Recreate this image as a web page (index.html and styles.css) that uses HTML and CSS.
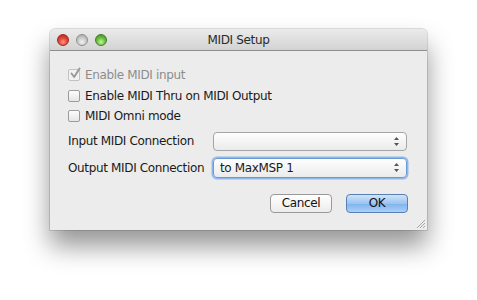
FILE: index.html
```html
<!DOCTYPE html>
<html>
<head>
<meta charset="utf-8">
<link rel="stylesheet" href="styles.css">
</head>
<body>
<div class="window">
  <div class="titlebar">
    <div class="lights">
      <span class="light red"></span>
      <span class="light gray"></span>
      <span class="light green"></span>
    </div>
    <div class="title">MIDI Setup</div>
  </div>
  <div class="content">
    <label class="check disabled"><span class="box checked"><svg width="13" height="13" viewBox="0 0 13 13"><path d="M2.5 6.5 L5.2 10 L10.5 1.5" fill="none" stroke="#9a9a9a" stroke-width="2" stroke-linecap="round" stroke-linejoin="round"/></svg></span>Enable MIDI input</label>
    <label class="check"><span class="box"></span>Enable MIDI Thru on MIDI Output</label>
    <label class="check"><span class="box"></span>MIDI Omni mode</label>
    <div class="field first">
      <span class="flabel">Input MIDI Connection</span>
      <div class="popup"><span class="ptext"></span><span class="arrows"><svg width="7" height="11" viewBox="0 0 7 11"><path d="M1 4 L3.5 1 L6 4 Z M1 7 L3.5 10 L6 7 Z" fill="#555"/></svg></span></div>
    </div>
    <div class="field">
      <span class="flabel">Output MIDI Connection</span>
      <div class="popup focus"><span class="ptext">to MaxMSP 1</span><span class="arrows"><svg width="7" height="11" viewBox="0 0 7 11"><path d="M1 4 L3.5 1 L6 4 Z M1 7 L3.5 10 L6 7 Z" fill="#555"/></svg></span></div>
    </div>
    <div class="buttons">
      <button class="btn">Cancel</button>
      <button class="btn default">OK</button>
    </div>
  </div>
  <svg class="grip" width="11" height="11" viewBox="0 0 11 11"><path d="M10 2 L2 10 M10 5 L5 10 M10 8 L8 10" stroke="#a8a8a8" stroke-width="1"/></svg>
</div>
</body>
</html>
```
FILE: styles.css
```css
html, body {
  margin: 0;
  padding: 0;
  background: #fff;
}
body {
  width: 477px;
  height: 300px;
  overflow: hidden;
  font-family: "DejaVu Sans", "Liberation Sans", sans-serif;
  font-size: 12px;
  letter-spacing: -0.35px;
  color: #1a1a1a;
}
.window {
  position: relative;
  margin: 29px 0 0 50px;
  width: 377px;
  height: 201px;
  background: #ececec;
  border-radius: 5px 5px 0 0;
  box-shadow: 0 16px 26px rgba(0,0,0,0.42), 0 0 0 1px rgba(0,0,0,0.12);
  display: flex;
  flex-direction: column;
}
.titlebar {
  height: 21px;
  flex: none;
  border-radius: 5px 5px 0 0;
  background: linear-gradient(#ebebeb, #d3d3d3);
  border-bottom: 1px solid #8e8e8e;
  display: flex;
  align-items: center;
  position: relative;
}
.lights {
  display: flex;
  gap: 7px;
  margin-left: 7px;
}
.light {
  width: 12px;
  height: 12px;
  border-radius: 50%;
  box-sizing: border-box;
}
.red {
  background: radial-gradient(circle at 50% 70%, #ff9a8a 0%, #e5483b 45%, #b01e14 100%);
  border: 1px solid #9e2a20;
}
.gray {
  background: radial-gradient(circle at 50% 70%, #f4f4f4 0%, #c9c9c9 50%, #a0a0a0 100%);
  border: 1px solid #8f8f8f;
}
.green {
  background: radial-gradient(circle at 50% 70%, #c8f5a0 0%, #6fc144 45%, #3a8a1c 100%);
  border: 1px solid #3f7f22;
}
.title {
  position: absolute;
  left: 0;
  right: 0;
  text-align: center;
  font-size: 12px;
  color: #2a2a2a;
  pointer-events: none;
}
.content {
  padding: 14px 0 0 18px;
  display: flex;
  flex-direction: column;
}
.check {
  display: flex;
  align-items: center;
  height: 20.5px;
  gap: 4px;
}
.check.disabled {
  color: #8c8c8c;
}
.box {
  width: 12px;
  height: 12px;
  box-sizing: border-box;
  border: 1px solid #9c9c9c;
  border-radius: 2px;
  background: linear-gradient(#fdfdfd, #e6e6e6);
  position: relative;
  margin-right: 1px;
}
.box.checked {
  border-color: #c2c2c2;
  background: #f2f2f2;
}
.box svg {
  position: absolute;
  left: 0;
  top: -3px;
}
.field {
  display: flex;
  align-items: center;
  margin-top: 6px;
}
.field.first {
  margin-top: 5px;
}
.field + .field {
  margin-top: 7px;
}
.flabel {
  width: 145px;
}
.popup {
  width: 194px;
  height: 19px;
  box-sizing: border-box;
  border: 1px solid #a5a5a5;
  border-radius: 4px;
  background: linear-gradient(#fefefe, #ebebeb);
  display: flex;
  align-items: center;
  justify-content: space-between;
  padding: 0 6px 0 6px;
}
.popup.focus {
  border-color: #6b9bd6;
  box-shadow: 0 0 0 1.5px #8fb8ea;
  height: 20px;
}
.arrows {
  display: flex;
}
.buttons {
  display: flex;
  justify-content: flex-end;
  gap: 14px;
  margin-top: 16px;
  padding-right: 19px;
}
.btn {
  width: 62px;
  height: 19px;
  box-sizing: border-box;
  font-family: "DejaVu Sans", "Liberation Sans", sans-serif;
  font-size: 12px;
  letter-spacing: -0.35px;
  color: #111;
  border: 1px solid #9a9a9a;
  border-radius: 4px;
  background: linear-gradient(#ffffff, #ececec);
  padding: 0;
}
.btn.default {
  border-color: #5a7fb2;
  background: linear-gradient(#cfe3fa 0%, #9cc4f0 50%, #7fb2ec 51%, #a8d0fa 100%);
}
.grip {
  position: absolute;
  right: 1px;
  bottom: 1px;
}
```
